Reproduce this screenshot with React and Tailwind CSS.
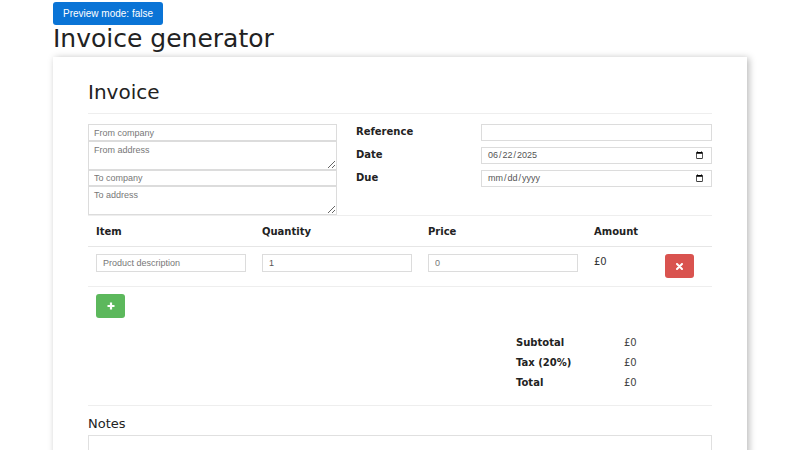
import React from "react";

const dv = { fontFamily: '"DejaVu Sans", sans-serif' };
const lib = { fontFamily: '"Liberation Sans", Arial, sans-serif' };

const inputCls =
  "block w-full border border-[#dcdcdc] bg-white px-[5px] text-[9px] text-[#555] placeholder:text-[#777] outline-none";

function Plus() {
  return (
    <svg width="8" height="8" viewBox="0 0 8 8">
      <path d="M4 0.5v7M0.5 4h7" stroke="white" strokeWidth="2.2" />
    </svg>
  );
}

function Times() {
  return (
    <svg width="7" height="7" viewBox="0 0 7 7">
      <path d="M1 1l5 5M6 1l-5 5" stroke="white" strokeWidth="2" strokeLinecap="round" />
    </svg>
  );
}

export default function App() {
  return (
    <div className="w-[800px] h-[450px] overflow-hidden bg-white text-[#222]" style={dv}>
      <div className="pl-[53px]">
        <button
          className="h-[23px] px-[10px] bg-[#0a74d6] text-white text-[10px] rounded-[3px] leading-[23px]"
          style={lib}
        >
          Preview mode: false
        </button>
        <h1 className="text-[25px] leading-[28px] text-[#222]">Invoice generator</h1>
      </div>

      <div className="ml-[53px] mt-[4px] w-[694px] h-[400px] bg-white shadow-[2px_1px_7px_rgba(0,0,0,0.28)] px-[35px] pt-[24px]">
        <h2 className="text-[20px] leading-[23px] text-[#222]">Invoice</h2>
        <div className="mt-[9px] border-t border-[#eeeeee]" />

        <div className="mt-[10px] flex">
          <div className="w-[249px] flex flex-col" style={lib}>
            <input className={inputCls + " h-[17px]"} placeholder="From company" />
            <textarea className={inputCls + " h-[29px] pt-[2px] resize-y"} placeholder="From address" />
            <input className={inputCls + " h-[16px]"} placeholder="To company" />
            <textarea className={inputCls + " h-[29px] pt-[2px] resize-y"} placeholder="To address" />
          </div>
          <div className="ml-[19px] flex-1 flex flex-col gap-[6px]">
            {[
              ["Reference", <input key="r" className={inputCls + " h-[17px]"} style={lib} />],
              [
                "Date",
                <input key="d" type="date" defaultValue="2025-06-22" className={inputCls + " h-[17px]"} style={lib} />,
              ],
              ["Due", <input key="u" type="date" className={inputCls + " h-[17px]"} style={lib} />],
            ].map(([label, input]) => (
              <div key={label} className="flex items-start h-[17px]">
                <div className="w-[125px] text-[10px] font-bold leading-[15px] text-[#222]">{label}</div>
                <div className="flex-1">{input}</div>
              </div>
            ))}
          </div>
        </div>

        <div className="border-t border-[#eeeeee]">
          <div className="grid grid-cols-[166px_166px_166px_71px_55px] h-[31px] items-center border-b border-[#e6e6e6] text-[10px] font-bold text-[#222]">
            <div className="pl-[8px]">Item</div>
            <div className="pl-[8px]">Quantity</div>
            <div className="pl-[8px]">Price</div>
            <div className="pl-[8px]">Amount</div>
            <div />
          </div>
          <div className="grid grid-cols-[166px_166px_166px_71px_55px] h-[40px] items-start pt-[7px] border-b border-[#eeeeee]">
            <div className="pl-[8px] pr-[8px]" style={lib}>
              <input className={inputCls + " h-[18px] pl-[6px]"} placeholder="Product description" />
            </div>
            <div className="pl-[8px] pr-[8px]" style={lib}>
              <input className={inputCls + " h-[18px] pl-[6px]"} defaultValue="1" />
            </div>
            <div className="pl-[8px] pr-[8px]" style={lib}>
              <input className={inputCls + " h-[18px] pl-[6px] text-[#777]"} defaultValue="0" />
            </div>
            <div className="pl-[8px] text-[10px] leading-[16px] text-[#333]">£0</div>
            <div className="pl-[8px]">
              <button className="w-[29px] h-[24px] bg-[#d9534f] rounded-[3px] flex items-center justify-center">
                <Times />
              </button>
            </div>
          </div>
        </div>

        <div className="pl-[8px] mt-[7px]">
          <button className="w-[29px] h-[24px] bg-[#5cb85c] rounded-[3px] flex items-center justify-center">
            <Plus />
          </button>
        </div>

        <div className="mt-[15px] ml-[428px] grid grid-cols-[108px_80px] text-[10px] leading-[20px]">
          <div className="font-bold text-[#222]">Subtotal</div>
          <div className="text-[#444]">£0</div>
          <div className="font-bold text-[#222]">Tax (20%)</div>
          <div className="text-[#444]">£0</div>
          <div className="font-bold text-[#222]">Total</div>
          <div className="text-[#444]">£0</div>
        </div>

        <div className="mt-[12px] border-t border-[#eeeeee]" />
        <div className="mt-[9px] text-[13px] leading-[17px] text-[#222]">Notes</div>
        <div className="mt-[3px] h-[40px] border border-[#e0e0e0]" />
      </div>
    </div>
  );
}
